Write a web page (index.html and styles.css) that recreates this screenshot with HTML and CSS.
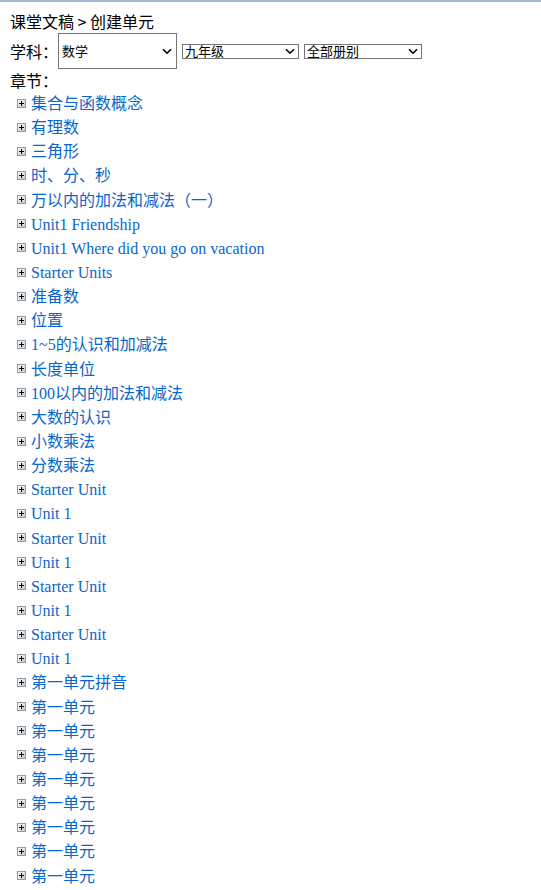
FILE: index.html
```html
<!DOCTYPE html>
<html lang="zh-CN">
<head>
<meta charset="utf-8">
<title>创建单元</title>
<link rel="stylesheet" href="styles.css">
</head>
<body>
<div class="topline"></div>
<div class="page">
  <div class="crumb">课堂文稿 &gt; 创建单元</div>
  <div class="filters">
    <span class="label">学科：</span>
    <div class="sel sel-big"><span class="sel-text">数学</span><svg class="chev" width="10" height="7" viewBox="0 0 10 7"><path d="M1 1.2 L5 5.2 L9 1.2" fill="none" stroke="#000" stroke-width="1.6"/></svg></div>
    <div class="sel sel-small sel-grade"><span class="sel-text">九年级</span><svg class="chev" width="10" height="7" viewBox="0 0 10 7"><path d="M1 1.2 L5 5.2 L9 1.2" fill="none" stroke="#000" stroke-width="1.6"/></svg></div>
    <div class="sel sel-small sel-book"><span class="sel-text">全部册别</span><svg class="chev" width="10" height="7" viewBox="0 0 10 7"><path d="M1 1.2 L5 5.2 L9 1.2" fill="none" stroke="#000" stroke-width="1.6"/></svg></div>
  </div>
  <div class="label-line">章节：</div>
  <ul class="tree" id="tree"></ul>
</div>
<script src="app.js"></script>
</body>
</html>
```

FILE: app.js
```js
var items = [
  "集合与函数概念","有理数","三角形","时、分、秒","万以内的加法和减法（一）",
  "Unit1 Friendship","Unit1 Where did you go on vacation","Starter Units",
  "准备数","位置","1~5的认识和加减法","长度单位","100以内的加法和减法",
  "大数的认识","小数乘法","分数乘法","Starter Unit","Unit 1","Starter Unit",
  "Unit 1","Starter Unit","Unit 1","Starter Unit","Unit 1","第一单元拼音",
  "第一单元","第一单元","第一单元","第一单元","第一单元","第一单元","第一单元","第一单元"
];
var icon = '<svg class="plus" width="9" height="9" viewBox="0 0 9 9">' +
  '<defs><linearGradient id="g" x1="0" y1="0" x2="1" y2="1"><stop offset="0" stop-color="#ffffff"/><stop offset="1" stop-color="#c4c4c4"/></linearGradient></defs>' +
  '<rect x="0.5" y="0.5" width="8" height="8" fill="url(#g)" stroke="#8c9aab"/>' +
  '<path d="M2 4.5 H7 M4.5 2 V7" stroke="#000" stroke-width="1"/></svg>';
var html = "";
for (var i = 0; i < items.length; i++) {
  html += '<li class="node">' + icon + '<a class="node-link" href="#">' + items[i] + '</a></li>';
}
document.getElementById("tree").innerHTML = html;
```

FILE: styles.css
```css
html, body {
  margin: 0;
  padding: 0;
  background: #fff;
}
body {
  font-family: "Noto Sans CJK SC", "Noto Sans", sans-serif;
  font-size: 16px;
  color: #000;
}
.topline {
  height: 2px;
  background: #a3b7d0;
}
.page {
  padding: 0 10px;
}
.crumb {
  padding-top: 8px;
  line-height: 22px;
  height: 22px;
}
.filters {
  display: flex;
  align-items: center;
  margin-top: 1px;
  height: 36px;
}
.label {
  line-height: 20px;
}
.sel {
  box-sizing: border-box;
  display: flex;
  align-items: center;
  justify-content: space-between;
  border: 1px solid #767676;
  background: #fff;
  font-size: 13px;
  color: #000;
}
.sel-text {
  line-height: 14px;
}
.sel-big {
  width: 119px;
  height: 36px;
  padding: 0 4px 0 3px;
}
.sel-small {
  height: 15px;
  padding: 0 3px 0 2px;
  margin-left: 5px;
}
.sel-grade { width: 117px; }
.sel-book { width: 118px; }
.chev { display: block; }
.label-line {
  line-height: 20px;
  height: 20px;
  margin-top: 1px;
}
.tree {
  list-style: none;
  margin: 0;
  padding: 2px 0 0 7px;
}
.node {
  display: flex;
  align-items: center;
  height: 24.15px;
}
.plus {
  display: block;
  flex: none;
  margin-right: 5px;
  margin-top: -2px;
}
.node-link {
  font-family: "Liberation Serif", "Noto Sans CJK SC", serif;
  font-size: 16px;
  line-height: 20px;
  color: #0a66cc;
  text-decoration: none;
}
```
